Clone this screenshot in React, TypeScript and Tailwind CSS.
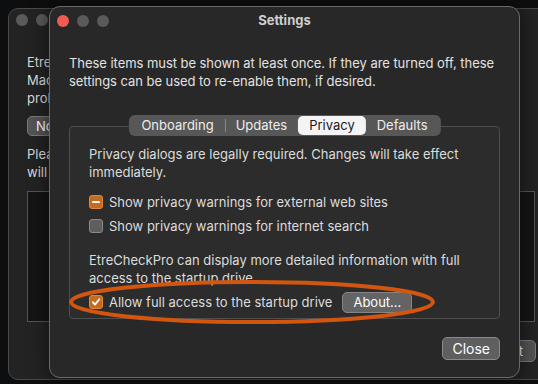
import React from "react";

const font = { fontFamily: "Inter, 'Liberation Sans', Arial, sans-serif" };

function Lights({ red }: { red?: boolean }) {
  return (
    <div className="flex gap-[8px]">
      <span className={`block h-[12px] w-[12px] rounded-full ${red ? "bg-[#ee5b52]" : "bg-[#5a5a5a]"}`} />
      <span className="block h-[12px] w-[12px] rounded-full bg-[#5a5a5a]" />
      <span className="block h-[12px] w-[12px] rounded-full bg-[#5a5a5a]" />
    </div>
  );
}

function Check({ state }: { state: "on" | "off" | "mixed" }) {
  if (state === "off")
    return <span className="block h-[14px] w-[14px] shrink-0 rounded-[3px] border border-[#8a8a8a] bg-[#5e5e5e]" />;
  return (
    <span className="flex h-[14px] w-[14px] shrink-0 items-center justify-center rounded-[3px] border border-[#e0883c] bg-[#c66a1e]">
      {state === "mixed" ? (
        <span className="block h-[2px] w-[8px] rounded bg-white" />
      ) : (
        <svg width="10" height="10" viewBox="0 0 10 10">
          <path d="M1.8 5.2 L4 7.6 L8.3 2.2" fill="none" stroke="white" strokeWidth="1.8" strokeLinecap="round" strokeLinejoin="round" />
        </svg>
      )}
    </span>
  );
}

export default function App() {
  return (
    <div className="relative h-[384px] w-[538px] overflow-hidden bg-[#0d0e10] text-[13px] text-[#dcdcdc]" style={font}>
      {/* back window */}
      <div className="absolute left-[8px] top-[8px] h-[372px] w-[548px] rounded-[10px] border border-[#4a4a4a] bg-[#232323]">
        <div className="pl-[7px] pt-[5px]">
          <Lights />
        </div>
        <div className="px-[18px] pt-[27px] leading-[18px]">
          <div className="w-[24px] overflow-hidden whitespace-nowrap">
            <p>EtreCheckPro can check your</p>
            <p>Mac and report on any potential</p>
            <p>problems.</p>
            <div className="mt-[9px] inline-block rounded-[5px] border border-[#7a7a7a] bg-[#555] px-[8px] leading-[18px] text-white">Not Now</div>
            <p className="mt-[9px]">Please wait while EtreCheckPro</p>
            <p>will run.</p>
          </div>
          <div className="mt-[10px] h-[131px] w-[508px] border border-[#555] bg-[#151515]" />
          <div className="mt-[18px] flex w-[509px] justify-end">
            <div className="rounded-[5px] border border-[#7a7a7a] bg-[#555] px-[12px] leading-[20px] text-white">Start</div>
          </div>
        </div>
      </div>

      {/* front window */}
      <div className="absolute left-[49px] top-[6px] flex h-[372px] w-[471px] flex-col rounded-[11px] border border-[#6a6a6a] bg-[#282828] shadow-[0_0_20px_rgba(0,0,0,0.6)]">
        <div className="relative flex h-[26px] items-center px-[7px] pt-[1px]">
          <Lights red />
          <div className="absolute inset-x-0 top-[4px] text-center text-[13px] font-bold text-[#cfcfcf]">Settings</div>
        </div>
        <div className="px-[19px] pt-[21px] leading-[18px] tracking-[-0.05px] text-[#e2e2e2]">
          <p>These items must be shown at least once. If they are turned off, these</p>
          <p>settings can be used to re-enable them, if desired.</p>
        </div>

        <div className="relative mx-[19px] mt-[36px] h-[193px] rounded-[4px] border border-[#4e4e4e] bg-[#2c2c2c]">
          <div className="absolute left-1/2 top-[-12px] flex h-[21px] -translate-x-1/2 items-center rounded-[6px] bg-[#575757] px-[1px] text-[#ededed]">
            <span className="pl-[12px] pr-[11px]">Onboarding</span>
            <span className="h-[13px] w-px bg-[#8a8a8a]" />
            <span className="pl-[10px] pr-[11px]">Updates</span>
            <span className="flex h-[19px] items-center rounded-[5px] bg-[#f4f4f4] px-[11px] text-[#1a1a1a]">Privacy</span>
            <span className="pl-[11px] pr-[12px]">Defaults</span>
          </div>

          <div className="px-[19px] pt-[18px] leading-[18px]">
            <p>Privacy dialogs are legally required. Changes will take effect</p>
            <p>immediately.</p>
            <div className="mt-[9px] flex h-[24px] items-center gap-[6px]">
              <Check state="mixed" />
              <span>Show privacy warnings for external web sites</span>
            </div>
            <div className="flex h-[24px] items-center gap-[6px]">
              <Check state="off" />
              <span>Show privacy warnings for internet search</span>
            </div>
            <p className="mt-[13px]">EtreCheckPro can display more detailed information with full</p>
            <p>access to the startup drive.</p>
            <div className="mt-[2px] flex h-[26px] items-center gap-[6px]">
              <Check state="on" />
              <span>Allow full access to the startup drive</span>
              <span className="ml-[4px] flex h-[21px] items-center rounded-[5px] border border-[#858585] bg-[#646464] px-[10px] text-white">About...</span>
            </div>
          </div>
        </div>

        <div className="mt-[18px] flex justify-end px-[19px]">
          <div className="flex h-[23px] items-center rounded-[5px] border border-[#8a8a8a] bg-[#5f5f5f] px-[9px] text-[14px] text-white">Close</div>
        </div>
      </div>

      {/* highlight ellipse */}
      <svg className="pointer-events-none absolute left-0 top-0" width="538" height="384">
        <ellipse cx="252" cy="302" rx="181" ry="20" fill="none" stroke="#d2560f" strokeWidth="4" />
      </svg>
    </div>
  );
}
